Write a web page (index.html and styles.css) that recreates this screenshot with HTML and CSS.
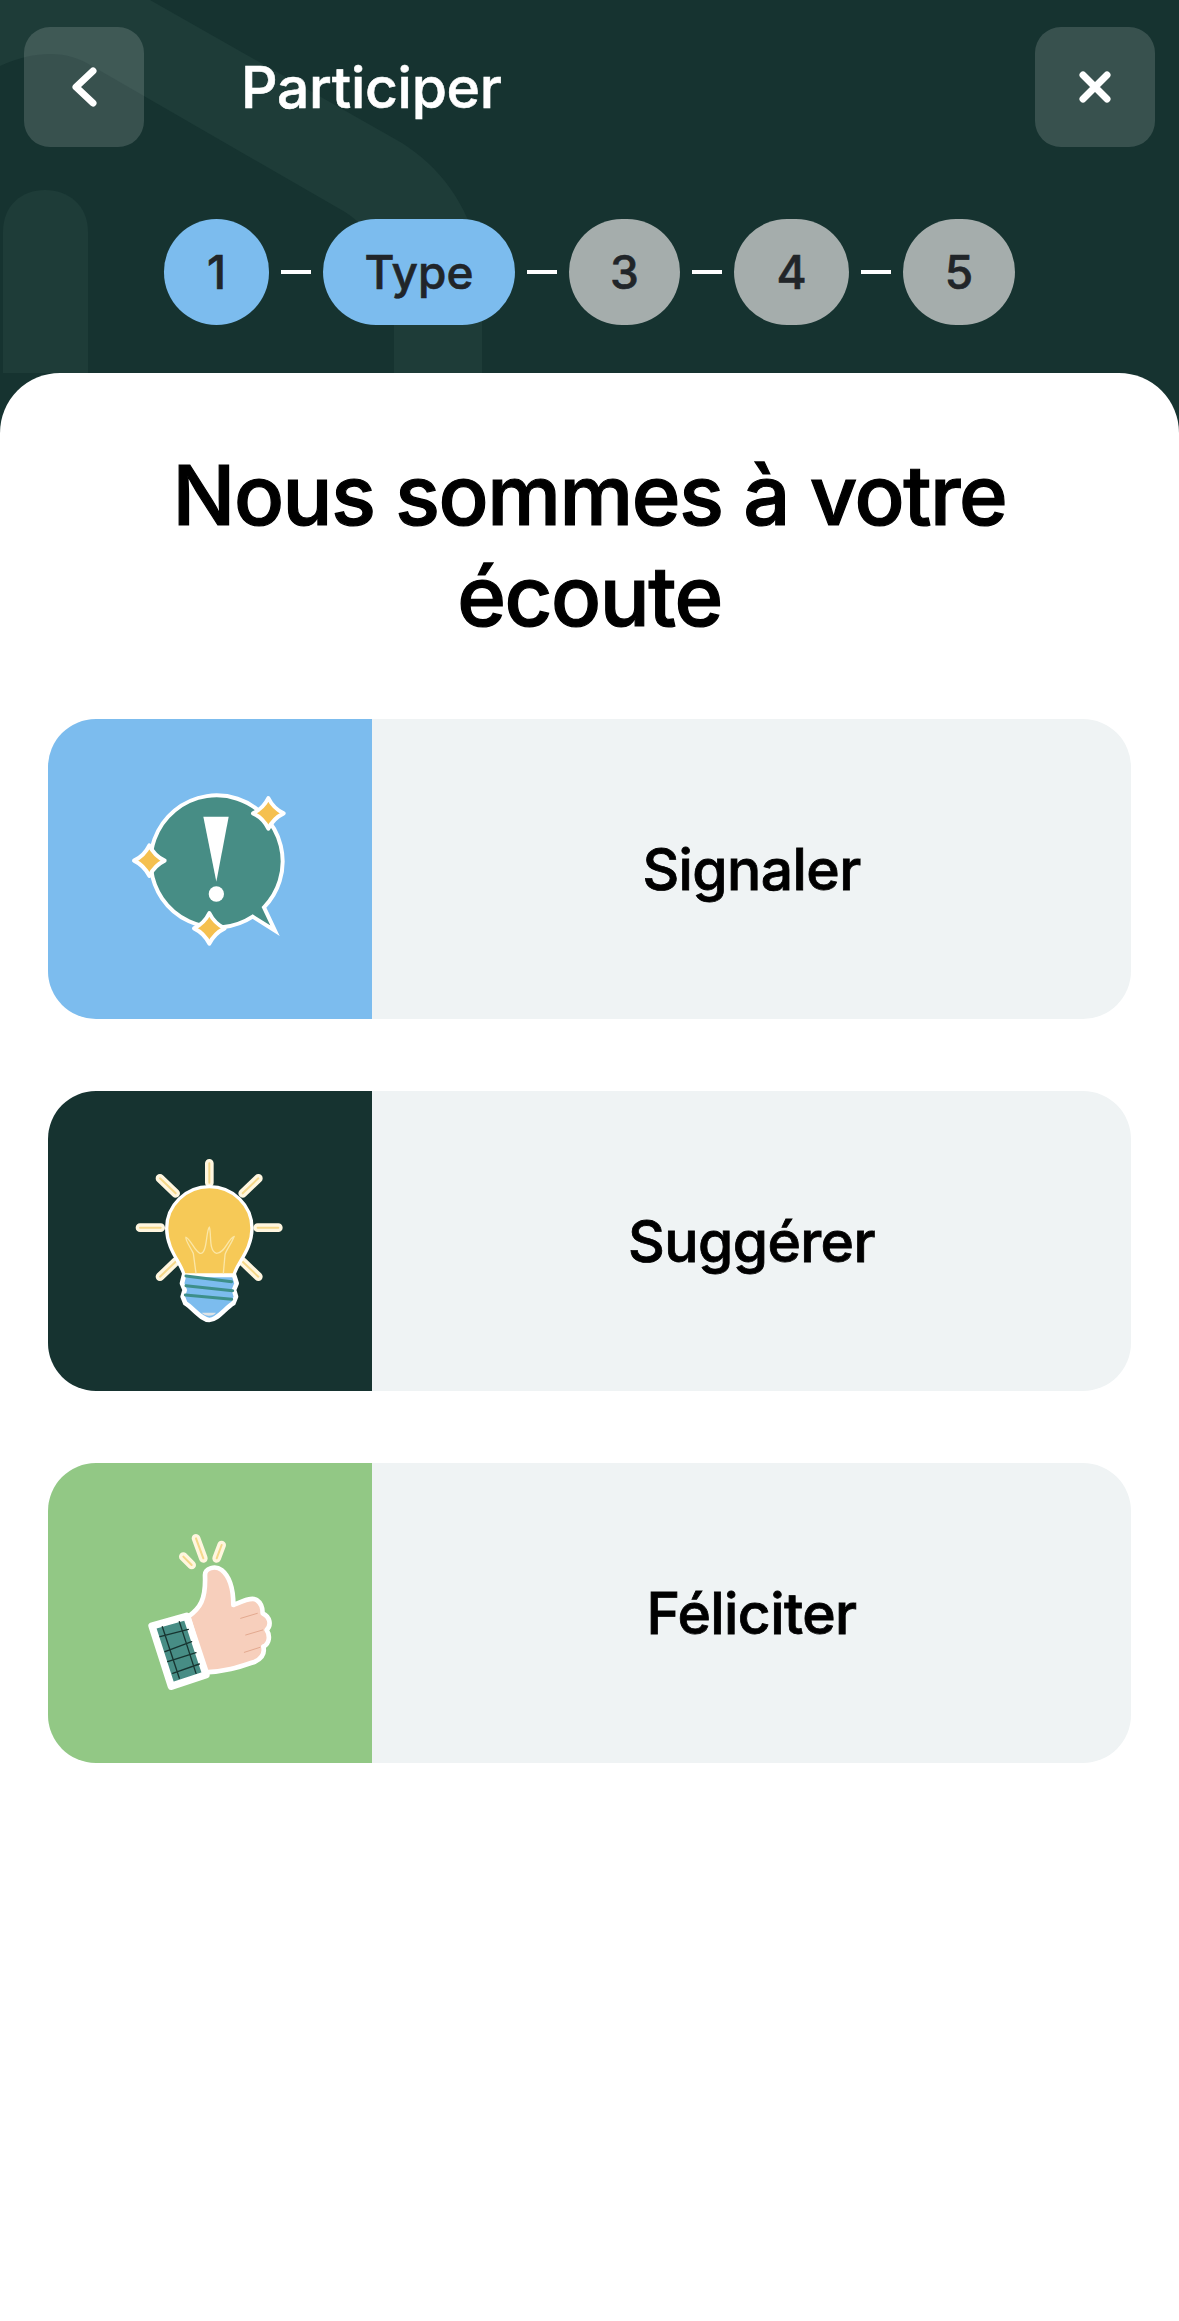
FILE: index.html
```html
<!DOCTYPE html>
<html lang="fr">
<head>
  <meta charset="UTF-8" />
  <meta name="viewport" content="width=device-width, initial-scale=1.0" />
  <title>Participer</title>
  <link rel="stylesheet" href="styles.css">
</head>
<body>
  <div class="screen">
    <svg class="header-art" viewBox="0 0 1179 373" width="1179" height="373">
      <path class="art-shape" d="M0 0 H150 L402 143 C445 170 482 220 482 290 V373 H394 V310 C394 270 380 235 345 212 L92 66 C70 52 40 48 0 66 Z"/>
      <path class="art-shape" d="M3 373 V232 C3 205 22 190 45 190 C68 190 88 205 88 232 V373 Z"/>
    </svg>

    <header class="topbar">
      <button class="icon-btn">
        <svg width="30" height="44" viewBox="0 0 30 44"><path class="icon-line" d="M24 6 L7 22 L24 38"/></svg>
      </button>
      <h1 class="page-title">Participer</h1>
      <button class="icon-btn close-btn">
        <svg width="36" height="36" viewBox="0 0 36 36"><path class="icon-line" d="M6 6 L30 30 M30 6 L6 30"/></svg>
      </button>
    </header>

    <div class="steps">
      <span class="step step-done step-1">1</span>
      <span class="step-dash"></span>
      <span class="step step-done step-type">Type</span>
      <span class="step-dash"></span>
      <span class="step step-3">3</span>
      <span class="step-dash"></span>
      <span class="step step-4">4</span>
      <span class="step-dash"></span>
      <span class="step step-5">5</span>
    </div>

    <main class="sheet">
      <h2 class="sheet-title">Nous sommes à votre écoute</h2>

      <div class="choices">
        <a class="choice">
          <div class="choice-tile tile-blue">
            <svg width="220" height="200" viewBox="0 27 660 600">
              <defs>
                <path id="star" d="M0 -46 Q15 -15 46 0 Q15 15 0 46 Q-15 15 -46 0 Q-15 -15 0 -46 Z"/>
              </defs>
              <path d="M492 442 L525 512 L458 470 A198 198 0 1 1 492 442 Z" fill="#478d85" stroke="#fff" stroke-width="12"/>
              <path d="M310 170 H386 L349 365 Z" fill="#fff"/>
              <circle cx="349" cy="402" r="23" fill="#fff"/>
              <use href="#star" class="star" x="148" y="302"/>
              <use href="#star" class="star" x="505" y="160"/>
              <use href="#star" class="star" x="328" y="505"/>
            </svg>
          </div>
          <span class="choice-label">Signaler</span>
        </a>

        <a class="choice">
          <div class="choice-tile tile-dark">
            <svg width="200" height="200" viewBox="0 3 600 600">
              <path class="ray-out" d="M298 70 V128 M90 263 H152 M443 263 H505 M150 115 L197 160 M445 115 L398 160 M197 365 L150 410 M398 365 L445 410"/>
              <path class="ray-in" d="M298 70 V128 M90 263 H152 M443 263 H505 M150 115 L197 160 M445 115 L398 160 M197 365 L150 410 M398 365 L445 410"/>
              <path d="M226 490 L218 470 L224 450 L216 430 L222 405 H372 L380 430 L372 450 L378 470 L370 490 C345 505 322 540 298 540 C274 540 250 505 226 490 Z" fill="#7cbcee" stroke="#fff" stroke-width="14" stroke-linejoin="round"/>
              <path d="M222 405 C215 370 170 330 170 265 A128 125 0 0 1 426 265 C426 330 380 370 372 405 Z" fill="#f6c957" stroke="#fff" stroke-width="10"/>
              <path d="M258 400 L250 340 C240 320 225 300 228 292 C240 295 255 335 270 340 C292 345 288 270 298 262 C305 280 295 335 320 340 C345 340 355 295 372 290 C365 310 345 335 345 345 L340 400" fill="none" stroke="#fbe6a5" stroke-width="4"/>
              <path d="M228 408 L365 425 M228 437 L368 452 M226 465 L365 478" stroke="#3d8f8a" stroke-width="9" stroke-linecap="round"/>
              <path d="M275 518 C285 530 310 530 318 518 Z" fill="#dfe3e6"/>
            </svg>
          </div>
          <span class="choice-label">Suggérer</span>
        </a>

        <a class="choice">
          <div class="choice-tile tile-green">
            <svg width="180" height="200" viewBox="0 9 540 600">
              <path class="ray-out" d="M190 140 L215 165 M228 85 L250 145 M305 105 L290 145"/>
              <path class="ray-in" d="M190 140 L215 165 M228 85 L250 145 M305 105 L290 145"/>
              <path d="M205 320 C240 295 258 270 255 195 C255 175 285 165 305 180 C330 200 340 240 340 285 C365 275 395 260 410 270 C425 280 428 300 428 310 C450 320 455 345 440 360 C450 375 450 400 430 410 C435 430 425 445 405 455 C360 470 320 485 255 487 Z" fill="#f7cfbc" stroke="#fff" stroke-width="14" stroke-linejoin="round"/>
              <path d="M362 325 L412 310 M377 375 L428 360 M373 427 L420 412" stroke="#e3a98f" stroke-width="3" stroke-linecap="round"/>
              <path d="M96 348 L200 319 L258 494 L154 529 Z" fill="#478d85" stroke="#fff" stroke-width="22" stroke-linejoin="round"/>
              <path d="M127 350 L178 505 M178 335 L228 490 M120 380 L205 358 M135 425 L215 395 M143 455 L228 428 M158 490 L238 462" stroke="#173430" stroke-width="4" stroke-linecap="round"/>
            </svg>
          </div>
          <span class="choice-label">Féliciter</span>
        </a>
      </div>
    </main>
  </div>
</body>
</html>
```

FILE: styles.css
```css
* {
  box-sizing: border-box;
}

body {
  margin: 0;
  font-family: "Inter", "Noto Sans", sans-serif;
  background-color: #163330;
}

.screen {
  position: relative;
  display: flex;
  flex-direction: column;
  height: 2321px;
  overflow: hidden;
  background-color: #163330;
}

.header-art {
  position: absolute;
  top: 0;
  left: 0;
}

.art-shape {
  fill: #1e3c38;
}

.topbar {
  position: relative;
  display: flex;
  align-items: center;
  padding: 27px 24px 0;
}

.icon-btn {
  display: flex;
  align-items: center;
  justify-content: center;
  width: 120px;
  height: 120px;
  padding: 0;
  border: none;
  border-radius: 26px;
  background-color: rgba(255, 255, 255, 0.15);
}

.close-btn {
  margin-left: auto;
}

.icon-line {
  fill: none;
  stroke: #fff;
  stroke-width: 7;
  stroke-linecap: round;
  stroke-linejoin: round;
}

.page-title {
  margin: 0 0 0 97px;
  font-size: 57px;
  font-weight: 500;
  letter-spacing: -0.3px;
  color: #fff;
  -webkit-text-stroke: 0.6px #fff;
}

.steps {
  position: relative;
  display: flex;
  align-items: center;
  justify-content: center;
  gap: 12px;
  margin-top: 72px;
}

.step {
  display: flex;
  align-items: center;
  justify-content: center;
  height: 106px;
  border-radius: 53px;
  font-size: 46px;
  font-weight: 500;
  color: #212529;
  background-color: #a5adac;
  -webkit-text-stroke: 0.6px #212529;
}

.step-done {
  background-color: #7cbcee;
}

.step-1 {
  width: 105px;
}

.step-type {
  width: 192px;
}

.step-3 {
  width: 111px;
}

.step-4 {
  width: 115px;
}

.step-5 {
  width: 112px;
}

.step-dash {
  width: 30px;
  height: 4px;
  background-color: #fff;
}

.sheet {
  position: relative;
  flex: 1;
  margin-top: 48px;
  padding: 72px 48px 0;
  border-radius: 60px 60px 0 0;
  background-color: #fff;
}

.sheet-title {
  width: 900px;
  margin: 0 auto;
  font-size: 83px;
  font-weight: 500;
  line-height: 101px;
  letter-spacing: -1.4px;
  text-align: center;
  color: #000;
  -webkit-text-stroke: 1.2px #000;
}

.choices {
  display: flex;
  flex-direction: column;
  gap: 72px;
  margin-top: 72px;
}

.choice {
  display: flex;
  height: 300px;
  border-radius: 48px;
  overflow: hidden;
  background-color: #eff3f4;
}

.choice-tile {
  display: flex;
  align-items: center;
  justify-content: center;
  width: 324px;
}

.tile-blue {
  background-color: #7cbcee;
}

.tile-dark {
  background-color: #163330;
}

.tile-green {
  background-color: #92c885;
}

.choice-label {
  display: flex;
  flex: 1;
  align-items: center;
  justify-content: center;
  font-size: 57px;
  font-weight: 500;
  letter-spacing: -0.6px;
  color: #000;
  -webkit-text-stroke: 0.8px #000;
}

.star {
  fill: #f5c04f;
  stroke: #fff;
  stroke-width: 12;
  stroke-linejoin: round;
}

.ray-out {
  fill: none;
  stroke: #fff6df;
  stroke-width: 26;
  stroke-linecap: round;
}

.ray-in {
  fill: none;
  stroke: #f6d88a;
  stroke-width: 6;
  stroke-linecap: round;
}
```
